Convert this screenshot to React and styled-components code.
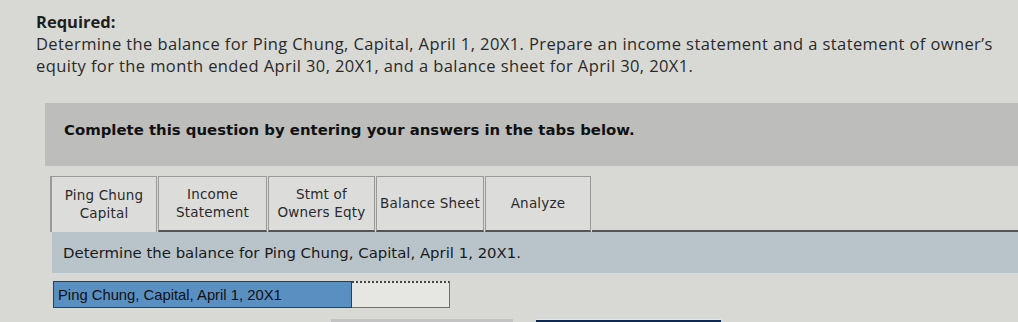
import styled, { createGlobalStyle } from "styled-components"

const Global = createGlobalStyle`
    body {
        margin: 0;
        background: #d8d9d5;
        font-family: 'Open Sans', sans-serif;
        overflow: hidden;
    }
`

export default function App() {
    const tabs = [
        ['Ping Chung', 'Capital'],
        ['Income', 'Statement'],
        ['Stmt of', 'Owners Eqty'],
        ['Balance Sheet'],
        ['Analyze'],
    ]

    return (
        <>
            <Global />
            <Page>
                <Required>
                    <h3>Required:</h3>
                    <p>Determine the balance for Ping Chung, Capital, April 1, 20X1. Prepare an income statement and a statement of owner’s equity for the month ended April 30, 20X1, and a balance sheet for April 30, 20X1.</p>
                </Required>
                <Banner>Complete this question by entering your answers in the tabs below.</Banner>
                <TabBar>
                    {tabs.map((t, idx) => (
                        <Tab key={idx} active={idx === 0} w={[107, 109, 107, 108, 106][idx]}>
                            {t.map((line, i) => <span key={i}>{line}</span>)}
                        </Tab>
                    ))}
                    <TabRest />
                </TabBar>
                <Instruction>Determine the balance for Ping Chung, Capital, April 1, 20X1.</Instruction>
                <AnswerRow>
                    <Label>Ping Chung, Capital, April 1, 20X1</Label>
                    <Entry />
                </AnswerRow>
                <Buttons>
                    <Btn />
                    <Btn dark />
                </Buttons>
            </Page>
        </>
    )
}

const Page = styled.div`
    width: 1018px;
    height: 322px;
    padding-top: 11px;
    box-sizing: border-box;
`
const Required = styled.div`
    padding-left: 36px;
    color: #2a2a2a;
    h3 {
        margin: 0;
        font-size: 16.5px;
        font-weight: 700;
        line-height: 22px;
        color: #1e1e1e;
    }
    p {
        margin: 0;
        font-size: 16.5px;
        letter-spacing: 0.4px;
        line-height: 22px;
        width: 975px;
    }
`
const Banner = styled.div`
    margin: 26px 0 0 45px;
    height: 63px;
    background: #bdbdbb;
    padding: 18px 0 0 19px;
    box-sizing: border-box;
    font-family: 'DejaVu Sans', Verdana, sans-serif;
    font-weight: 700;
    font-size: 14.9px;
    color: #111;
`
const TabBar = styled.div`
    display: flex;
    margin: 10px 0 0 50px;
    height: 56px;
    align-items: stretch;
`
const Tab = styled.div`
    width: ${props => props.w}px;
    box-sizing: border-box;
    margin-right: 1px;
    display: flex;
    flex-direction: column;
    align-items: center;
    justify-content: center;
    background: #dcdcda;
    border: 1px solid #9a9a98;
    border-bottom: ${props => props.active ? 'none' : '2px solid #555'};
    border-left-width: ${props => props.active ? '2px' : '1px'};
    font-family: 'DejaVu Sans', Verdana, sans-serif;
    font-size: 13.5px;
    line-height: 18px;
    color: #2a2a2a;
    padding-bottom: 2px;
    letter-spacing: 0.2px;
`
const TabRest = styled.div`
    flex: 1;
    border-bottom: 2px solid #555;
`
const Instruction = styled.div`
    margin-left: 52px;
    height: 41px;
    background: #b9c4ca;
    display: flex;
    align-items: center;
    padding-left: 11px;
    font-family: 'DejaVu Sans', Verdana, sans-serif;
    font-size: 14.9px;
    color: #1a1a1a;
`
const AnswerRow = styled.div`
    display: flex;
    margin: 8px 0 0 53px;
    height: 27px;
`
const Label = styled.div`
    width: 299px;
    box-sizing: border-box;
    background: #5a8fc2;
    border: 1px solid #2a3f55;
    display: flex;
    align-items: center;
    padding-left: 4px;
    font-family: 'Liberation Sans', Arial, sans-serif;
    font-size: 14.8px;
    color: #111;
`
const Entry = styled.div`
    width: 98px;
    box-sizing: border-box;
    background: #e6e6e2;
    border: 1px solid #6f6f6f;
    border-left: none;
    border-top: 2px dotted #444;
`
const Buttons = styled.div`
    display: flex;
    gap: 23px;
    margin: 11px 0 0 331px;
`
const Btn = styled.div`
    width: ${props => props.dark ? '185px' : '182px'};
    height: 10px;
    background: ${props => props.dark ? '#0f2a52' : '#c2c3c2'};
    border-top: ${props => props.dark ? '1px solid #e8e8e8' : 'none'};
`
